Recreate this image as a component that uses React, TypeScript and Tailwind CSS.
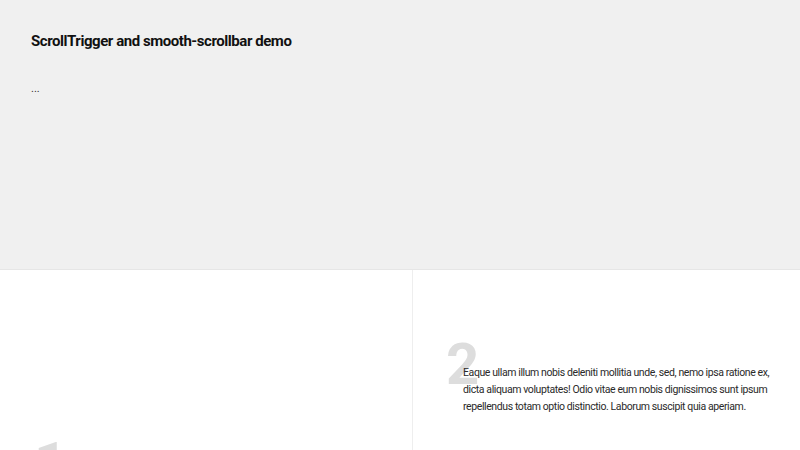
import React from "react";

export default function App() {
  return (
    <div className="w-[800px] h-[450px] overflow-hidden bg-white" style={{ fontFamily: "Roboto, 'Noto Sans', sans-serif" }}>
      <section className="h-[270px] bg-[#f0f0f0] border-b border-[#e6e6e6] pl-[31px] pt-[31px] text-[#111]">
        <h1 className="text-[15px] font-bold leading-[20px] tracking-[-0.45px]">ScrollTrigger and smooth-scrollbar demo</h1>
        <p className="mt-[30px] text-[11px] text-[#333]">...</p>
      </section>
      <div className="flex h-[180px]">
        <div className="w-[413px] border-r border-[#eeeeee] relative">
          <span className="absolute left-[34px] top-[164px] text-[58px] font-bold leading-none text-[#dddddd]">1</span>
        </div>
        <div className="flex-1 relative pl-[50px] pt-[94px]">
          <span className="absolute left-[33px] top-[65px] text-[58px] font-bold leading-none text-[#dddddd]">2</span>
          <p className="relative w-[320px] text-[10.5px] leading-[17px] text-[#2a2a2a] tracking-[-0.4px]">
            Eaque ullam illum nobis deleniti mollitia unde, sed, nemo ipsa ratione ex, dicta aliquam voluptates! Odio vitae eum nobis dignissimos sunt ipsum repellendus totam optio distinctio. Laborum suscipit quia aperiam.
          </p>
        </div>
      </div>
    </div>
  );
}
